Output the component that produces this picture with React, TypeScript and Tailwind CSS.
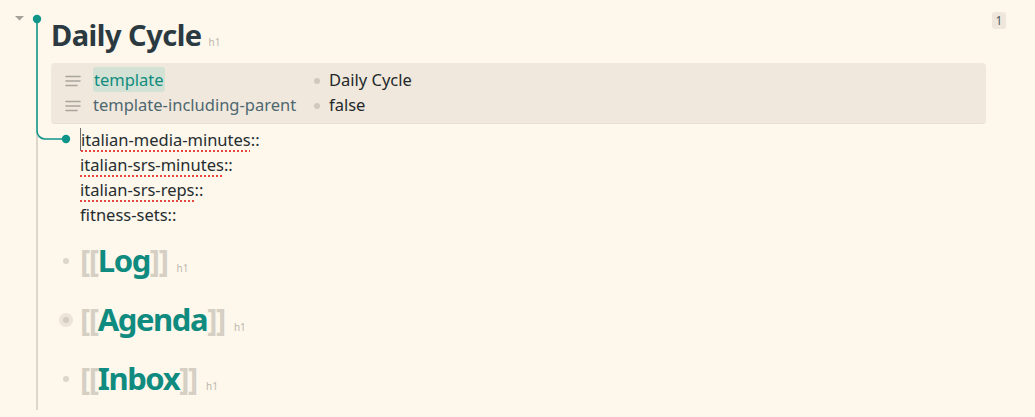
import React from 'react';

const font = { fontFamily: '"Noto Sans", "Open Sans", sans-serif' };

const Hamburger: React.FC = () => (
  <svg width="16" height="12" viewBox="0 0 16 12" className="shrink-0">
    <path d="M1 1.5h14M1 6h14M1 10.5h11" stroke="#a9a59d" strokeWidth="1.6" strokeLinecap="round" />
  </svg>
);

const PropRow: React.FC<{ name: string; value: string; active?: boolean }> = ({ name, value, active }) => (
  <div className="flex items-center h-[25px]">
    <div className="w-[42px] flex justify-end pr-[12px]">
      <Hamburger />
    </div>
    <div className="w-[221px] shrink-0">
      {active ? (
        <span className="bg-[#d3e2d5] text-[#0f8c7e] rounded-[3px] px-[1px] py-[1px]">{name}</span>
      ) : (
        <span className="text-[#4d6770]">{name}</span>
      )}
    </div>
    <span className="w-[6px] h-[6px] rounded-full bg-[#cfc9be] mr-[9px]" />
    <span className="text-[#23292b]">{value}</span>
  </div>
);

const Heading: React.FC<{ title: string; halo?: boolean }> = ({ title, halo }) => (
  <div className="flex items-center h-[59px]">
    <div className="w-[29px] flex justify-center">
      {halo ? (
        <span className="w-[14px] h-[14px] rounded-full bg-[#ebe4d7] flex items-center justify-center">
          <span className="w-[6px] h-[6px] rounded-full bg-[#d2ccc1]" />
        </span>
      ) : (
        <span className="w-[6px] h-[6px] rounded-full bg-[#dcd6cb]" />
      )}
    </div>
    <div className="flex items-baseline">
      <span className="text-[31px] font-bold leading-none tracking-[-1.4px]">
        <span className="text-[#d5cfc4]">[[</span>
        <span className="text-[#0f8b7f]">{title}</span>
        <span className="text-[#d5cfc4]">]]</span>
      </span>
      <span className="text-[10px] text-[#bdb7ad] ml-[9px]">h1</span>
    </div>
  </div>
);

const Misspelled: React.FC<{ word: string }> = ({ word }) => (
  <span className="underline decoration-dotted decoration-[#e5473f] decoration-[1.5px] underline-offset-[4px]">{word}</span>
);

export default function App() {
  return (
    <div className="relative min-h-screen bg-[#fdf7ec] text-[16.5px]" style={font}>
      {/* connector lines */}
      <svg className="absolute left-0 top-0 pointer-events-none" width="80" height="417">
        <path d="M37 131V410" stroke="#ddd6ca" strokeWidth="2" />
        <path d="M37 19V131a8 8 0 0 0 8 8H64" stroke="#0f948a" strokeWidth="1.6" fill="none" />
        <circle cx="37" cy="19" r="4.2" fill="#0f948a" />
        <circle cx="66" cy="139" r="4.2" fill="#0f948a" />
        <path d="M15 16h9l-4.5 4.5z" fill="#a4a19b" />
      </svg>

      <div className="absolute right-[29px] top-[12px] w-[14px] h-[17px] rounded-[3px] bg-[#efe7dc] flex items-center justify-center text-[12px] text-[#505a5c]">
        1
      </div>

      <div className="pl-[51px] pt-[20px] pr-[49px]">
        <div className="flex items-baseline h-[37px]">
          <h1 className="text-[29px] font-bold text-[#2b3a41] leading-none tracking-[-0.5px]">Daily Cycle</h1>
          <span className="text-[10px] text-[#bdb7ad] ml-[7px]">h1</span>
        </div>

        <div className="mt-[6px] bg-[#f0e8dc] rounded-[4px] border-b border-[#e8dfd2] pt-[5px] pb-[5px]">
          <PropRow name="template" value="Daily Cycle" active />
          <PropRow name="template-including-parent" value="false" />
        </div>
      </div>

      <div className="pl-[80px] pt-[3px] text-[#262d30] leading-[25px]">
        <div>
          <span className="border-l border-[#6b6b6b]"></span>
          <Misspelled word="italian-media-minutes" />::
        </div>
        <div>
          <Misspelled word="italian-srs-minutes" />::
        </div>
        <div>
          <Misspelled word="italian-srs-reps" />::
        </div>
        <div>fitness-sets::</div>
      </div>

      <div className="pl-[51px] pt-[4px]">
        <Heading title="Log" />
        <Heading title="Agenda" halo />
        <Heading title="Inbox" />
      </div>
    </div>
  );
}
